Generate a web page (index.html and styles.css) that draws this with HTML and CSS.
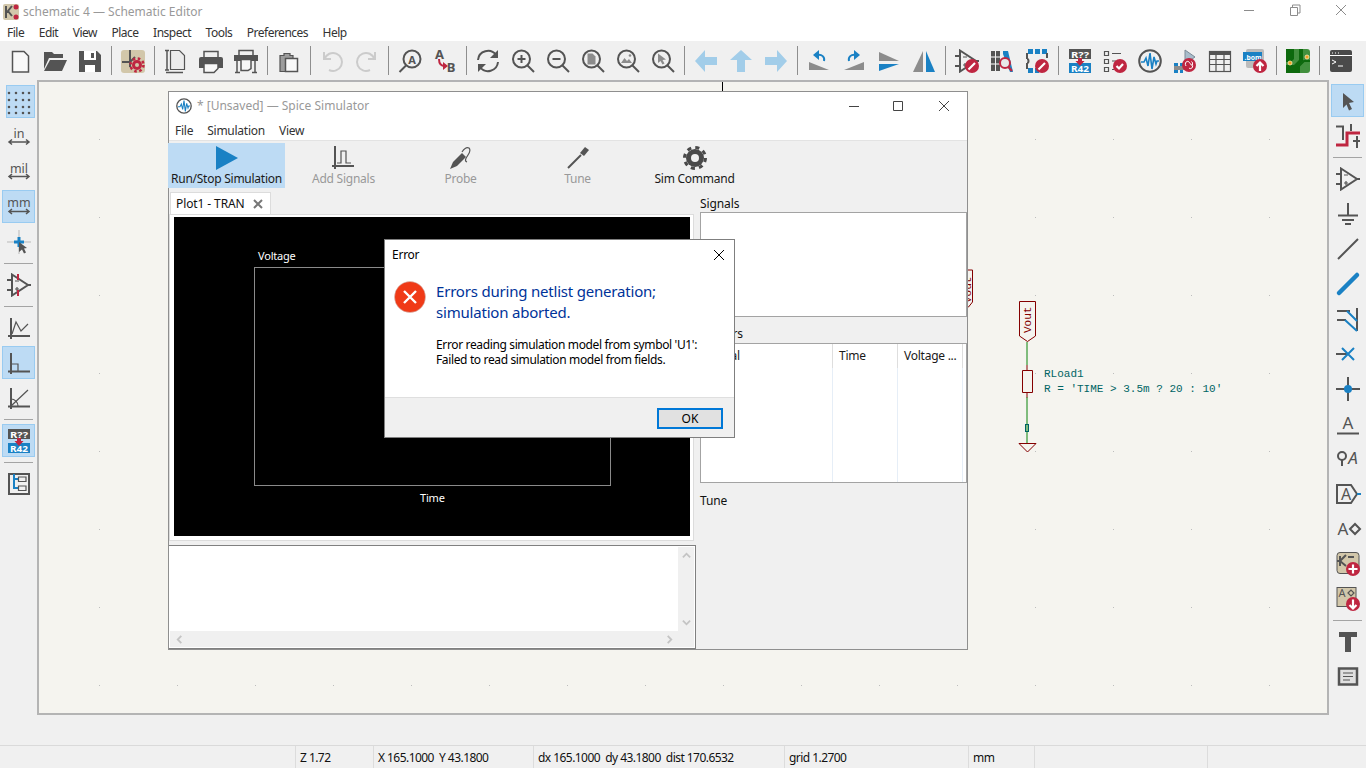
FILE: index.html
```html
<!DOCTYPE html>
<html lang="en">
<head>
<meta charset="utf-8">
<title>schematic 4 — Schematic Editor</title>
<link rel="stylesheet" href="styles.css">
</head>
<body>
<svg class="sprite" aria-hidden="true">
  <defs>
    <symbol id="opamp" viewBox="0 0 24 24">
      <path class="s" d="M5 1.500 21 12 5 22.500Z"/><path class="s" d="M0 7h5M0 17h5M21 12h3"/>
      <path class="s1" d="M8 8h4M8 16h4M10 14v4"/>
    </symbol>
    <symbol id="r42" viewBox="0 0 24 24">
      <rect class="f" x="1" y="0" width="22" height="10"/><text class="itx" x="12" y="8.600" textLength="18" lengthAdjust="spacingAndGlyphs">R??</text>
      <rect class="b" x="1" y="14" width="22" height="10"/><text class="itx" x="12" y="22.800" textLength="18" lengthAdjust="spacingAndGlyphs">R42</text>
      <path class="r" d="M10 9h4v3h2.500L12 17l-4.500-5H10z"/>
    </symbol>
    <symbol id="sim" viewBox="0 0 24 24">
      <circle class="s" cx="12" cy="12" r="10.800"/>
      <path class="bs1" d="M3 13h3l2-4 2 8 2-13 2 16 2-12 2 7 1-3h2"/>
    </symbol>
    <symbol id="pen" viewBox="0 0 24 24">
      <circle class="r" cx="17" cy="17" r="7"/><path class="ws" d="M13.500 20.500 20 14"/>
    </symbol>
    <symbol id="mag" viewBox="0 0 24 24">
      <circle class="s" cx="10.500" cy="10" r="8.500"/><path class="s" d="M16.500 16.500 23 23"/>
    </symbol>
  </defs>
</svg>

<div class="app">
  <header class="titlebar">
    <svg class="ic16" viewBox="0 0 16 16"><rect x="0" y="0" width="16" height="16" rx="2" class="tan"/><path class="s" d="M3 2v12M3 8h3M9 2 5 7l4 5"/><circle class="r" cx="13" cy="3" r="2.500"/><circle class="r" cx="13" cy="13" r="2.500"/></svg>
    <span class="title-text">schematic 4 — Schematic Editor</span>
    <div class="winctl">
      <svg class="ctl" viewBox="0 0 46 20"><path class="thin" d="M18 10.500H28"/></svg>
      <svg class="ctl" viewBox="0 0 46 20"><path class="thin" d="M18.500 7.500h7v8h-7zM20.500 7.500v-2.500h7.500v8h-2.500"/></svg>
      <svg class="ctl" viewBox="0 0 46 20"><path class="thin" d="M18 5 28 15M28 5 18 15"/></svg>
    </div>
  </header>

  <nav class="menubar">
    <span>File</span><span>Edit</span><span>View</span><span>Place</span><span>Inspect</span><span>Tools</span><span>Preferences</span><span>Help</span>
  </nav>

  <div class="toolbar">
    <div class="tb"><svg class="ic" viewBox="0 0 24 24"><path class="sp" d="M4.500 2.500H16L20.500 7V23H4.500Z"/></svg></div>
    <div class="tb"><svg class="ic" viewBox="0 0 24 24"><path class="f" d="M1 3h8l2 2h9v4H6L1 20z"/><path class="f" d="M7 11h17l-5 11H1z"/></svg></div>
    <div class="tb"><svg class="ic" viewBox="0 0 24 24"><path class="f" d="M1 2h18l4 4v17H1z"/><path class="w" d="M6 2h12v9H6z"/><path class="f" d="M13 4h3v5h-3z"/><path class="w" d="M7 16h10v7H7z"/></svg></div>
    <i class="hs"></i>
    <div class="tb"><svg class="ic" viewBox="0 0 24 24"><rect class="tan" x="0" y="1" width="24" height="23" rx="3"/><path class="s" d="M9 1v8M1 13h8M9 9v9"/><path class="s" d="M9 13 14 8"/><circle class="r" cx="16" cy="16" r="5"/><circle class="gearteeth" cx="16" cy="16" r="6.500"/><circle class="tanw" cx="16" cy="16" r="2"/></svg></div>
    <i class="hs"></i>
    <div class="tb"><svg class="ic" viewBox="0 0 24 24"><path class="s15" d="M1 1.500h4M3 1.500V21M1 21h4M2 23.500h17"/><path class="sg" d="M6.500 1.500h9l5 5v14h-14z"/></svg></div>
    <div class="tb"><svg class="ic" viewBox="0 0 24 24"><path class="s15" d="M5 8V2.500h14V8"/><path class="f" d="M2 8h20a2 2 0 0 1 2 2v9h-5v-5H5v5H0v-9a2 2 0 0 1 2-2z"/><path class="sp" d="M5 14.500h14v5l-4 4H5z"/></svg></div>
    <div class="tb"><svg class="ic" viewBox="0 0 24 24"><path class="s15" d="M5 7V1.500h14V7"/><path class="f" d="M0 6h24v6H0z"/><path class="s15" d="M3 12v11M21 12v11M1 23.500h5M18 23.500h5"/><path class="sp" d="M7 10.500h10v9l-3 2H7z"/></svg></div>
    <i class="hs"></i>
    <div class="tb"><svg class="ic" viewBox="0 0 24 24"><path class="pb" d="M3 6.500h4v-2h6v2h3v16H3z"/><path class="sp" d="M8.500 9.500h12v13h-12z"/></svg></div>
    <i class="hs"></i>
    <div class="tb"><svg class="ic" viewBox="0 0 24 24"><path class="dis" d="M4 3v7h7"/><path class="dis" d="M4.500 10A9 9 0 1 1 9 21"/></svg></div>
    <div class="tb"><svg class="ic" viewBox="0 0 24 24"><path class="dis" d="M20 3v7h-7"/><path class="dis" d="M19.500 10A9 9 0 1 0 15 21"/></svg></div>
    <i class="hs"></i>
    <div class="tb"><svg class="ic" viewBox="0 0 24 24"><circle class="s" cx="14" cy="10" r="8.500"/><path class="s" d="M8 16.500 1.500 23"/><text class="ita" x="14" y="14.500">A</text></svg></div>
    <div class="tb"><svg class="ic" viewBox="0 0 24 24"><text class="itb" x="6.500" y="10">A</text><text class="itb" x="18" y="23">B</text><path class="rs" d="M6 10c0 5 2 7 6 7"/><path class="r" d="M10 13l5 4-5 4z"/></svg></div>
    <i class="hs"></i>
    <div class="tb"><svg class="ic" viewBox="0 0 24 24"><path class="s" d="M2 11A10 10 0 0 1 20 6"/><path class="f" d="M22 1v8h-8z"/><path class="s" d="M22 13A10 10 0 0 1 4 18"/><path class="f" d="M2 23v-8h8z"/></svg></div>
    <div class="tb"><svg class="ic" viewBox="0 0 24 24"><use href="#mag"/><path class="s" d="M6.500 10h8M10.500 6v8"/></svg></div>
    <div class="tb"><svg class="ic" viewBox="0 0 24 24"><use href="#mag"/><path class="s" d="M6.500 10h8"/></svg></div>
    <div class="tb"><svg class="ic" viewBox="0 0 24 24"><use href="#mag"/><path class="p8" d="M6.500 4.500h5l3 3v8h-8z"/></svg></div>
    <div class="tb"><svg class="ic" viewBox="0 0 24 24"><use href="#mag"/><path class="p8" d="M5 14l3.500-5 2.500 3 2-2 3 4z"/><circle class="p8" cx="14" cy="6.500" r="1.300"/></svg></div>
    <div class="tb"><svg class="ic" viewBox="0 0 24 24"><use href="#mag"/><path class="p8" d="M7 4.500l8 6-3.500.5 2 3.500-2 1-2-3.500L7 14z"/></svg></div>
    <i class="hs"></i>
    <div class="tb"><svg class="ic" viewBox="0 0 24 24"><path class="lb" d="M1 12 11 1v7h12v8H11v7z"/></svg></div>
    <div class="tb"><svg class="ic" viewBox="0 0 24 24"><path class="lb" d="M12 1 23 11h-7v12H8V11H1z"/></svg></div>
    <div class="tb"><svg class="ic" viewBox="0 0 24 24"><path class="lb" d="M23 12 13 1v7H1v8h12v7z"/></svg></div>
    <i class="hs"></i>
    <div class="tb"><svg class="ic" viewBox="0 0 24 24"><path class="p8" d="M2 13 22 21H2z"/><path class="bs" d="M17 12c1-4-2-7-7-6"/><path class="b" d="M12 1 6 6l6 5z"/></svg></div>
    <div class="tb"><svg class="ic" viewBox="0 0 24 24"><path class="p8" d="M22 13 2 21h20z"/><path class="bs" d="M7 12c-1-4 2-7 7-6"/><path class="b" d="M12 1l6 5-6 5z"/></svg></div>
    <div class="tb"><svg class="ic" viewBox="0 0 24 24"><path class="p8" d="M2 3 22 12H2z"/><path class="b" d="M2 15H22L2 22z"/></svg></div>
    <div class="tb"><svg class="ic" viewBox="0 0 24 24"><path class="p8" d="M11 2v21H1z"/><path class="b" d="M14 2l9 21h-9z"/></svg></div>
    <i class="hs"></i>
    <div class="tb"><svg class="ic" viewBox="0 0 24 24"><use href="#opamp"/><use href="#pen"/></svg></div>
    <div class="tb"><svg class="ic" viewBox="0 0 24 24"><path class="b" d="M13 2h5l5 21h-3L13 5z"/><path class="f" d="M1 2h4v20H1zM6 2h4v20H6z"/><path class="ws1" d="M1 8h4M1 15h4M6 8h4M6 15h4"/><circle class="sr" cx="15" cy="14" r="5"/><path class="rs" d="M18.500 18 22 22"/></svg></div>
    <div class="tb"><svg class="ic" viewBox="0 0 24 24"><path class="b" d="M3 0h5v5H3zM10 0h5v5h-5zM17 0h5v5h-5zM3 19h5v5H3zM10 19h4v5h-4z"/><path class="s" d="M2 4v6M2 14v6M22 4v5"/><path class="s" d="M2 10c2 0 2 4 0 4"/><use href="#pen"/></svg></div>
    <i class="hs"></i>
    <div class="tb"><svg class="ic" viewBox="0 0 24 24"><use href="#r42"/></svg></div>
    <div class="tb"><svg class="ic" viewBox="0 0 24 24"><path class="s1" d="M1.500 2.500h4v4h-4zM1.500 10.500h4v4h-4zM1.500 18.500h4v4h-4zM9 4.500h9M9 12h4M9 20.500h2"/><circle class="r" cx="17" cy="17" r="7"/><path class="ws" d="M13.500 17l2.500 2.500 4-4.500"/></svg></div>
    <div class="tb"><svg class="ic" viewBox="0 0 24 24"><use href="#sim"/></svg></div>
    <div class="tb"><svg class="ic" viewBox="0 0 24 24"><path class="pbl" d="M12 1 22 8 12 15z"/><path class="b" d="M1 14h4v3H1zM7 14h3v3H7zM1 21h4v3H1zM7 21h3v3H7z"/><path class="p8" d="M1 17h11v4H1z"/><circle class="r" cx="16" cy="16" r="7"/><path class="ws1" d="M13 17c-2-3 1-6 3-4s2 4 3 3 .5-3-.5-3.500M19 15c2 3-1 6-3 4"/></svg></div>
    <div class="tb"><svg class="ic" viewBox="0 0 24 24"><rect class="s1" x="1.500" y="2.500" width="21" height="20"/><path class="f" d="M1 2h22v4H1z"/><path class="s1" d="M1 10.500h22M1 15.500h22M8 2v21M16 2v21"/></svg></div>
    <div class="tb"><svg class="ic" viewBox="0 0 24 24"><rect class="pc" x="3" y="0" width="18" height="19" rx="2"/><rect class="b" x="0" y="3" width="19" height="9"/><text class="itx2" x="10" y="10.500" textLength="17" lengthAdjust="spacingAndGlyphs">.bom</text><circle class="r" cx="17" cy="17" r="7"/><path class="ws" d="M17 22v-8M13.500 17 17 13.500 20.500 17"/></svg></div>
    <i class="hs"></i>
    <div class="tb"><svg class="ic" viewBox="0 0 24 24"><rect class="gr" x="0" y="0" width="24" height="24" rx="3"/><path class="gk" d="M0 0h8v10l-3 3H0z"/><path class="gk" d="M0 24V16h8l5-5V0h4v12l-5 5v7z"/><path class="gd" d="M13 24V17l5-5h6"/><circle class="or" cx="4" cy="14" r="2"/><circle class="or" cx="21" cy="8" r="2"/></svg></div>
    <i class="hs"></i>
    <div class="tb"><svg class="ic" viewBox="0 0 24 24"><rect class="f4" x="1" y="1" width="22" height="22" rx="2"/><path class="ws1" d="M3 4h1M6 4h1M9 4h1M1 6.500h22M3 11l4 2-4 2M9 17h5"/></svg></div>
  </div>

  <main class="work">
    <aside class="side side-left">
      <div class="vb on narrow"><svg class="ic" viewBox="0 0 24 24"><path class="dots" d="M2 3h.01M9 3h.01M16 3h.01M22 3h.01M2 10h.01M9 10h.01M16 10h.01M22 10h.01M2 17h.01M9 17h.01M16 17h.01M22 17h.01M2 23h.01M9 23h.01M16 23h.01M22 23h.01"/></svg></div>
      <div class="vb"><svg class="ic" viewBox="0 0 24 24"><text class="itu" x="12" y="12.500">in</text><path class="s15" d="M2 17H22M5 14.500 2 17l3 2.500M19 14.500l3 2.500-3 2.500"/></svg></div>
      <div class="vb"><svg class="ic" viewBox="0 0 24 24"><text class="itu" x="12" y="12.500">mil</text><path class="s15" d="M2 16.500H22M5 14 2 16.500 5 19M19 14l3 2.500-3 2.500"/></svg></div>
      <div class="vb on"><svg class="ic" viewBox="0 0 24 24"><text class="itu" x="12" y="12">mm</text><path class="s15" d="M2 16.500H22M5 14l-3 2.500L5 19M19 14l3 2.500L19 19"/></svg></div>
      <div class="vb"><svg class="ic" viewBox="0 0 24 24"><path class="lg" d="M0 12H24M12 0V24"/><path class="bs3" d="M7 12h10M12 7v10"/><path class="f" d="M12 12l0 10 3-2.500 2 4 2-1-2-4 3-.5z"/></svg></div>
      <i class="vs"></i>
      <div class="vb"><svg class="ic" viewBox="0 0 24 24"><use href="#opamp"/><path class="rs" d="M11 1v6M11 17v6"/></svg></div>
      <i class="vs"></i>
      <div class="vb"><svg class="ic" viewBox="0 0 24 24"><path class="s" d="M4 2V23M1 20H23"/><path class="s1" d="M5 18 9 6l5 9 7-7"/></svg></div>
      <div class="vb on"><svg class="ic" viewBox="0 0 24 24"><path class="s" d="M4 2V23M1 20.500H23"/><path class="s1" d="M4 13h7v7"/></svg></div>
      <div class="vb"><svg class="ic" viewBox="0 0 24 24"><path class="s" d="M4 2V23M1 20.500H23"/><path class="s1" d="M4 20 21 4M4 13a7 7 0 0 1 7 7"/></svg></div>
      <i class="vs"></i>
      <div class="vb on"><svg class="ic" viewBox="0 0 24 24"><use href="#r42"/></svg></div>
      <i class="vs"></i>
      <div class="vb"><svg class="ic" viewBox="0 0 24 24"><rect class="s" x="2" y="2" width="20" height="20"/><path class="bs" d="M7 2v15M7 7h4M7 16h4"/><path class="s1" d="M11.500 5h7.500v4.500h-7.500zM11.500 14h7.500v4.500h-7.500z"/></svg></div>
    </aside>

    <section class="canvas">
      <svg class="schem" viewBox="39 82 1288 631">
        <path class="wire-k" d="M722.500 82V92"/>
        <path class="dr" d="M960 270h12.500v32l-4 5H960z"/>
        <text class="sx" transform="translate(971 303) rotate(-90)">Vout</text>
        <path class="dr" d="M1019.500 301.500h16V336l-8 5.500-8-5.500z"/>
        <text class="sx" transform="translate(1031 333) rotate(-90)">Vout</text>
        <path class="wire-g" d="M1027 342V365M1027 397V443"/>
        <path class="dr" d="M1027 365v5M1022.500 370.500h10v22h-10zM1027 392.500v5M1019 443.500h17l-8.500 8.500z"/>
        <rect class="tl" x="1025.500" y="424.500" width="3" height="7"/>
        <text class="sx tl-t" x="1044" y="377">RLoad1</text>
        <text class="sx tl-t" x="1044" y="392">R = 'TIME &gt; 3.5m ? 20 : 10'</text>
      </svg>

      <div class="simwin">
        <div class="sim-title">
          <svg class="ic16" viewBox="0 0 24 24"><use href="#sim"/></svg>
          <span class="title-text">* [Unsaved] — Spice Simulator</span>
          <div class="sim-ctl">
            <svg class="ctl2" viewBox="0 0 46 20"><path class="thin-d" d="M20 10.500H30"/></svg>
            <svg class="ctl2" viewBox="0 0 46 20"><path class="thin-d" d="M18.500 5.500h9v9h-9z"/></svg>
            <svg class="ctl2" viewBox="0 0 46 20"><path class="thin-d" d="M18 5 28 15M28 5 18 15"/></svg>
          </div>
        </div>
        <nav class="sim-menu"><span>File</span><span>Simulation</span><span>View</span></nav>
        <div class="sim-body">
          <div class="sim-tools">
            <div class="stool on"><svg class="ic" viewBox="0 0 24 24"><path class="b" d="M1 0 23 12 1 24z"/></svg><span>Run/Stop Simulation</span></div>
            <div class="stool off"><svg class="ic" viewBox="0 0 24 24"><path class="s" d="M3 0V23M0 20H22"/><path class="s1" d="M5 17H9V5H14V17H19"/></svg><span>Add Signals</span></div>
            <div class="stool off"><svg class="ic" viewBox="0 0 24 24"><path class="f" d="M1 23l3-7 9-9 4 4-9 9z"/><path class="s1" d="M13 6c2-3 5-5 7-4 2 2 1 4-1 7s-4 6-1 7"/></svg><span>Probe</span></div>
            <div class="stool off"><svg class="ic" viewBox="0 0 24 24"><path class="s" d="M2 22 15 9"/><path class="f" d="M14 7 19 1l4 3-5 6z"/></svg><span>Tune</span></div>
            <div class="stool"><svg class="ic" viewBox="0 0 24 24"><circle class="f4" cx="12" cy="12" r="9"/><circle class="gear-d" cx="12" cy="12" r="10.500"/><circle class="hole" cx="12" cy="12" r="4"/></svg><span>Sim Command</span></div>
          </div>
          <div class="sim-main">
            <div class="sim-left">
              <div class="tabrow">
                <div class="tab"><span>Plot1 - TRAN</span><svg class="tabx" viewBox="0 0 10 10"><path d="M1 1 9 9M9 1 1 9"/></svg></div>
              </div>
              <div class="page">
                <svg class="plot" viewBox="0 0 516 319">
                  <text class="plot-t" x="84" y="43">Voltage</text>
                  <rect class="plot-r" x="80.500" y="50.500" width="356" height="218"/>
                  <text class="plot-t" x="246" y="285">Time</text>
                </svg>
              </div>
              <div class="console">
                <div class="cons-row">
                  <div class="cons-text"></div>
                  <div class="sb-v"><svg class="arrow" viewBox="0 0 10 10"><path d="M1 7 5 3l4 4"/></svg><svg class="arrow" viewBox="0 0 10 10"><path d="M1 3l4 4 4-4"/></svg></div>
                </div>
                <div class="sb-h"><svg class="arrow" viewBox="0 0 10 10"><path d="M7 1 3 5l4 4"/></svg><svg class="arrow" viewBox="0 0 10 10"><path d="M3 1l4 4-4 4"/></svg></div>
              </div>
            </div>
            <div class="sim-right">
              <div class="lbl">Signals</div>
              <div class="box sig"></div>
              <div class="lbl cur">Cursors</div>
              <div class="box curs">
                <div class="col c1"><span>Signal</span></div>
                <div class="col c2"><span>Time</span></div>
                <div class="col c3"><span>Voltage ...</span></div>
              </div>
              <div class="lbl tune">Tune</div>
            </div>
          </div>
        </div>
      </div>

      <div class="dialog">
        <div class="dlg-title"><span>Error</span><svg class="dlg-x" viewBox="0 0 12 12"><path d="M1 1 11 11M11 1 1 11"/></svg></div>
        <div class="dlg-body">
          <svg class="dlg-icon" viewBox="0 0 32 32"><circle class="err" cx="16" cy="16" r="15.500"/><path class="err-x" d="M10 10 22 22M22 10 10 22"/></svg>
          <div class="dlg-msg">
            <p class="dlg-main">Errors during netlist generation;<br>simulation aborted.</p>
            <p class="dlg-sub">Error reading simulation model from symbol 'U1':<br>Failed to read simulation model from fields.</p>
          </div>
        </div>
        <div class="dlg-foot"><button class="ok">OK</button></div>
      </div>
    </section>

    <aside class="side side-right">
      <div class="vb on"><svg class="ic" viewBox="0 0 24 24"><path class="f" d="M7 4 18 13l-5 1 3 6-3 1.500-2.500-6L7 19z"/></svg></div>
      <div class="vb"><svg class="ic" viewBox="0 0 24 24"><path class="s" d="M0 2.500H7V16M15 0V7M21 12V24M17 17h7"/><path class="rs3" d="M0 21H11V9H24"/></svg></div>
      <i class="vs"></i>
      <div class="vb"><svg class="ic" viewBox="0 0 24 24"><use href="#opamp"/></svg></div>
      <div class="vb"><svg class="ic" viewBox="0 0 24 24"><path class="s" d="M12 1V13M2 13.500H22M6 18H18M9 22H15"/></svg></div>
      <div class="vb"><svg class="ic" viewBox="0 0 24 24"><path class="s" d="M2 22 22 2"/></svg></div>
      <div class="vb"><svg class="ic" viewBox="0 0 24 24"><path class="bs4" d="M3 21 21 3"/></svg></div>
      <div class="vb"><svg class="ic" viewBox="0 0 24 24"><path class="s" d="M1 4H14M1 13H10M21 1V24"/><path class="bs" d="M11 4 21 14M9 13 21 24"/></svg></div>
      <div class="vb"><svg class="ic" viewBox="0 0 24 24"><path class="s" d="M0 12H12"/><path class="bs" d="M6 6 18 18M18 6 6 18"/></svg></div>
      <div class="vb"><svg class="ic" viewBox="0 0 24 24"><path class="s" d="M0 12H24M12 0V24"/><circle class="b" cx="12" cy="12" r="4"/></svg></div>
      <div class="vb"><svg class="ic" viewBox="0 0 24 24"><text class="itl" x="12" y="17">A</text><path class="s" d="M1 21.500H23"/></svg></div>
      <div class="vb"><svg class="ic" viewBox="0 0 24 24"><circle class="s" cx="6" cy="9" r="4"/><path class="s" d="M6 13v6"/><text class="itl it" x="17" y="17">A</text></svg></div>
      <div class="vb"><svg class="ic" viewBox="0 0 24 24"><path class="s" d="M1 3H15L21 12 15 21H1Z"/><text class="itl2" x="10" y="17.500">A</text><path class="bs" d="M21 12h4"/></svg></div>
      <div class="vb"><svg class="ic" viewBox="0 0 24 24"><text class="itl" x="7" y="18">A</text><path class="s" d="M14 12l5-5 5 5-5 5z"/></svg></div>
      <div class="vb"><svg class="ic" viewBox="0 0 24 24"><rect class="tan-s" x="1" y="0.500" width="22" height="21" rx="3"/><path class="s" d="M4 4v10M1 9h3M10 3 4 9l6 5M12 5h6"/><circle class="r" cx="17" cy="17" r="7"/><path class="ws" d="M12.500 17h9M17 12.500v9"/></svg></div>
      <div class="vb"><svg class="ic" viewBox="0 0 24 24"><rect class="tan-s" x="1" y="0.500" width="19" height="19"/><text class="ita2" x="6" y="10">A</text><path class="s1" d="M12 6l3-3 3 3-3 3z"/><circle class="r" cx="17" cy="17" r="7"/><path class="ws" d="M17 12.500v9M13.500 18 17 21.500 20.500 18"/></svg></div>
      <i class="vs"></i>
      <div class="vb"><svg class="ic" viewBox="0 0 24 24"><path class="f" d="M3 2H21V7H15V22H9V7H3z"/></svg></div>
      <div class="vb"><svg class="ic" viewBox="0 0 24 24"><rect class="nt" x="3" y="3.500" width="18" height="16"/><path class="s1" d="M7 8H17M7 11.500H17M7 15H14"/></svg></div>
    </aside>
  </main>

  <div class="msgbar"></div>

  <footer class="status">
    <span class="st s0"></span>
    <span class="st">Z 1.72</span>
    <span class="st">X 165.1000  Y 43.1800</span>
    <span class="st">dx 165.1000  dy 43.1800  dist 170.6532</span>
    <span class="st">grid 1.2700</span>
    <span class="st">mm</span>
    <span class="st"></span>
    <span class="st"></span>
  </footer>
</div>
</body>
</html>
```

FILE: styles.css
```css
* { box-sizing: border-box; }
html, body { margin: 0; padding: 0; }
body {
  width: 1366px; height: 768px; overflow: hidden;
  font: 12px/16px "Noto Sans", "Open Sans", sans-serif;
  letter-spacing: -0.25px;
  color: #1a1a1a; background: #f0f0f0;
}
.sprite { position: absolute; width: 0; height: 0; }
.app { display: flex; flex-direction: column; height: 768px; }

/* icon paint */
.ic { width: 24px; height: 24px; display: block; overflow: visible; flex: none; }
.ic16 { width: 16px; height: 16px; display: block; flex: none; }
.s  { fill: none; stroke: #545454; stroke-width: 2; }
.s1 { fill: none; stroke: #545454; stroke-width: 1.2; }
.s15 { fill: none; stroke: #545454; stroke-width: 1.5; }
.sp { fill: #f8f8f8; stroke: #545454; stroke-width: 1.5; }
.sg { fill: #ececec; stroke: #545454; stroke-width: 1.2; }
.f  { fill: #545454; }
.f4 { fill: #4a4a4a; }
.w  { fill: #fff; }
.b  { fill: #1a81c4; }
.bs { fill: none; stroke: #1a81c4; stroke-width: 2; }
.bs1 { fill: none; stroke: #1a81c4; stroke-width: 1.6; }
.bs3 { fill: none; stroke: #1a81c4; stroke-width: 3; }
.bs4 { fill: none; stroke: #1a81c4; stroke-width: 4.5; stroke-linecap: round; }
.r  { fill: #bf2641; }
.rs { fill: none; stroke: #bf2641; stroke-width: 2; }
.rs3 { fill: none; stroke: #bf2641; stroke-width: 3; }
.sr { fill: #e8e8e8; stroke: #bf2641; stroke-width: 2; }
.ws { fill: none; stroke: #fff; stroke-width: 2.2; }
.ws1 { fill: none; stroke: #fff; stroke-width: 1; }
.tan { fill: #d2c7aa; }
.tanw { fill: #d2c7aa; }
.tan-s { fill: #d2c7aa; stroke: #545454; stroke-width: 1; }
.gearteeth { fill: none; stroke: #bf2641; stroke-width: 2.5; stroke-dasharray: 2.55 2.55; }
.gear-d { fill: none; stroke: #4a4a4a; stroke-width: 3; stroke-dasharray: 4.12 4.12; }
.hole { fill: #f0f0f0; }
.pb { fill: #9c9c9c; stroke: #545454; stroke-width: 1.2; }
.pbl { fill: #a8bccb; stroke: #7a8a96; stroke-width: 1; }
.pc { fill: #bcbcbc; }
.p8 { fill: #8c8c8c; }
.lb { fill: #a2cde9; }
.dis { fill: none; stroke: #cbcbcb; stroke-width: 2; }
.lg { fill: none; stroke: #b9b9b9; stroke-width: 1; }
.gr { fill: #42903e; }
.gk { fill: #0d690d; }
.gd { fill: none; stroke: #0d690d; stroke-width: 2; }
.or { fill: #f0a21e; stroke: #ffe9b8; stroke-width: 0.8; }
.nt { fill: #e0e0e0; stroke: #545454; stroke-width: 2.5; }
.dots { fill: none; stroke: #545454; stroke-width: 2.6; stroke-linecap: round; }
.itx { font: 700 9.5px "Noto Sans", sans-serif; fill: #fff; text-anchor: middle; letter-spacing: 0; }
.itx2 { font: 700 7.5px "Noto Sans", sans-serif; fill: #fff; text-anchor: middle; letter-spacing: 0; }
.ita { font: 700 11px "Noto Sans", sans-serif; fill: #545454; text-anchor: middle; letter-spacing: 0; }
.ita2 { font: 400 11px "Noto Sans", sans-serif; fill: #545454; text-anchor: middle; letter-spacing: 0; }
.itb { font: 700 13px "Noto Sans", sans-serif; fill: #545454; text-anchor: middle; letter-spacing: 0; }
.itu { font: 400 12.5px "Noto Sans", sans-serif; fill: #545454; text-anchor: middle; letter-spacing: 0; }
.itl { font: 400 17px "Noto Sans", sans-serif; fill: #545454; text-anchor: middle; letter-spacing: 0; }
.itl2 { font: 400 16px "Noto Sans", sans-serif; fill: #545454; text-anchor: middle; letter-spacing: 0; }
.it { font-style: italic; }

/* title + menu */
.titlebar {
  height: 24px; flex: none; background: #fff;
  display: flex; align-items: center; padding-left: 3px; gap: 4px;
}
.title-text { color: #999; letter-spacing: 0; font-size: 12px; }
.winctl { margin-left: auto; display: flex; margin-top: -4px; margin-right: 2px; }
.ctl { width: 46px; height: 20px; display: block; }
.thin { fill: none; stroke: #8c8c8c; stroke-width: 1; }
.thin-d { fill: none; stroke: #444; stroke-width: 1; }
.menubar {
  height: 17px; flex: none; background: #fff; letter-spacing: -0.5px;
  display: flex; align-items: center; gap: 14.5px; padding-left: 7px; color: #333;
}

/* toolbars */
.toolbar { height: 39px; flex: none; display: flex; align-items: center; padding-left: 2px; background: #f0f0f0; }
.tb { width: 35px; height: 24px; display: flex; justify-content: center; }
.hs { width: 1px; height: 29px; background: #8e8e8e; margin: 0 3.5px; flex: none; }
.work { flex: none; height: 635px; display: flex; }
.side { flex: none; width: 37px; background: #f0f0f0; display: flex; flex-direction: column; padding-left: 2px; padding-right: 2px; }
.side-left { padding-top: 4px; }
.side-right { padding-top: 3px; }
.vb {
  flex: none; width: 33px; height: 33px; margin: 1px 0; border: 1px solid transparent;
  display: flex; align-items: center; justify-content: center;
}
.on { background: #bddbf4; border-color: #99cbf1; }
.narrow { width: 29px; margin-left: 4px; justify-content: flex-start; }
.vs { flex: none; display: block; height: 1px; background: #a4a4a4; margin: 3.5px 2px; }

/* canvas */
.canvas {
  flex: 1; position: relative; border: 2px solid #b4b4b4;
  background-color: #f5f4ef;
  background-image: radial-gradient(circle at 60.5px 57.5px, #bdbdbd 0.8px, transparent 1px);
  background-size: 78px 78px;
}
.schem { position: absolute; left: 0; top: 0; width: 1288px; height: 631px; }
.wire-k { fill: none; stroke: #000; stroke-width: 1; }
.wire-g { fill: none; stroke: #0a840a; stroke-width: 1; }
.dr { fill: none; stroke: #840000; stroke-width: 1; }
.tl { fill: none; stroke: #006464; stroke-width: 1; }
.sx { font: 400 11px "Liberation Mono", monospace; letter-spacing: 0; fill: #840000; }
.tl-t { fill: #006464; }

/* spice window */
.simwin {
  position: absolute; left: 129px; top: 9px; width: 800px; height: 559px;
  border: 1px solid #8f8f8f; background: #fff;
  display: flex; flex-direction: column;
}
.sim-title { flex: none; height: 28px; display: flex; align-items: center; padding-left: 7px; gap: 5px; }
.sim-ctl { margin-left: auto; display: flex; }
.ctl2 { width: 46px; height: 20px; display: block; }
.sim-menu { flex: none; height: 20px; display: flex; align-items: center; gap: 14px; padding: 2px 0 0 6px; color: #333; }
.sim-body { flex: 1; min-height: 0; background: #f0f0f0; border-top: 1px solid #e3e3e3; display: flex; flex-direction: column; }
.sim-tools { flex: none; height: 48px; padding-top: 2px; display: flex; margin-left: -1px; }
.stool {
  flex: none; width: 117px; height: 45px; border: 1px solid transparent;
  display: flex; flex-direction: column; align-items: center; padding-top: 2px;
  white-space: nowrap;
}
.stool span { margin-top: 1px; }
.off { color: #999; }
.sim-main { flex: 1; min-height: 0; display: flex; }
.sim-left { flex: none; width: 527px; display: flex; flex-direction: column; }
.tabrow { flex: none; height: 25px; padding: 3px 0 0 1px; display: flex; }
.tab {
  width: 101px; height: 22px; background: #fff; border: 1px solid #dcdcdc; border-bottom: 0;
  display: flex; align-items: center; padding-left: 5px; color: #111; letter-spacing: -0.1px;
}
.tabx { width: 10px; height: 10px; margin-left: auto; margin-right: 7px; }
.tabx path { fill: none; stroke: #777; stroke-width: 2; }
.page {
  flex: none; height: 327px; width: 525px; background: #fff; border: 1px solid #dcdcdc;
  padding: 2px 2px 4px 4px;
}
.plot { width: 516px; height: 319px; display: block; background: #000; }
.plot-t { font: 400 11px "Noto Sans", sans-serif; fill: #fff; letter-spacing: -0.2px; }
.plot-r { fill: none; stroke: #8a8a8a; stroke-width: 1; }
.console {
  flex: none; height: 104px; margin-top: 4px; background: #fff;
  border: 1px solid #808080; border-left: 0; display: flex; flex-direction: column;
  padding: 1px;
}
.cons-row { flex: 1; display: flex; min-height: 0; }
.cons-text { flex: 1; background: #fff; }
.sb-v { flex: none; width: 16px; background: #f0f0f0; display: flex; flex-direction: column; justify-content: space-between; align-items: center; padding: 4px 0; }
.sb-h { flex: none; height: 16px; background: #f0f0f0; display: flex; justify-content: space-between; align-items: center; padding: 0 20px 0 5px; }
.arrow { width: 9px; height: 9px; display: block; }
.arrow path { fill: none; stroke: #c4c4c4; stroke-width: 2; }
.sim-right { flex: 1; padding: 6px 0 0 4px; display: flex; flex-direction: column; }
.lbl { flex: none; height: 17px; line-height: 17px; color: #111; letter-spacing: -0.1px; }
.box { flex: none; background: #fff; border: 1px solid #a3a3a3; }
.sig { height: 105px; }
.cur { margin-top: 9px; height: 16px; line-height: 16px; }
.curs { height: 140px; margin-top: 1px; display: flex; }
.col {
  flex: none; padding: 4px 0 0 6px;
  background:
    linear-gradient(#dedede, #dedede) right top / 1px 24px no-repeat,
    linear-gradient(#e6eef7, #e6eef7) right top / 1px 100% no-repeat;
}
.c1 { width: 132px; }
.c2 { width: 65px; }
.c3 { width: 65px; }
.tune { margin-top: 9px; }

/* dialog */
.dialog {
  position: absolute; left: 345px; top: 157px; width: 351px; height: 199px;
  background: #fff; border: 1px solid #7f7f7f; display: flex; flex-direction: column; color: #000;
}
.dlg-title { flex: none; height: 30px; display: flex; align-items: center; padding: 0 9px 0 7px; }
.dlg-x { width: 12px; height: 12px; margin-left: auto; }
.dlg-x path { fill: none; stroke: #000; stroke-width: 1; }
.dlg-body { flex: 1; display: flex; padding: 11px 0 0 9px; gap: 10px; }
.dlg-icon { width: 32px; height: 32px; flex: none; }
.err { fill: #f03a17; stroke: #c9c9c9; stroke-width: 0.5; }
.err-x { fill: none; stroke: #fff; stroke-width: 2.4; }
.dlg-main { margin: 0; font-size: 15px; line-height: 21px; color: #003399; letter-spacing: -0.2px; }
.dlg-sub { margin: 14px 0 0; line-height: 15px; letter-spacing: -0.36px; }
.dlg-foot { flex: none; height: 40px; background: #f0f0f0; border-top: 1px solid #dfdfdf; display: flex; justify-content: flex-end; padding: 10px 11px 0 0; }
.ok {
  width: 66px; height: 21px; padding: 0; background: #e1e1e1; border: 2px solid #0078d7;
  font: 12px "Noto Sans", sans-serif; color: #000;
}

/* bottom */
.msgbar { height: 30px; flex: none; background: #f0f0f0; }
.status {
  flex: 1; display: grid; border-top: 1px solid #dadada;
  grid-template-columns: 295px 78px 160px 251px 184px 66px 173px 1fr;
  background: #f0f0f0; color: #111; letter-spacing: -0.55px;
}
.st { border-left: 1px solid #dcdcdc; padding: 4px 0 0 4px; white-space: pre; }
.s0 { border-left: 0; }
```
